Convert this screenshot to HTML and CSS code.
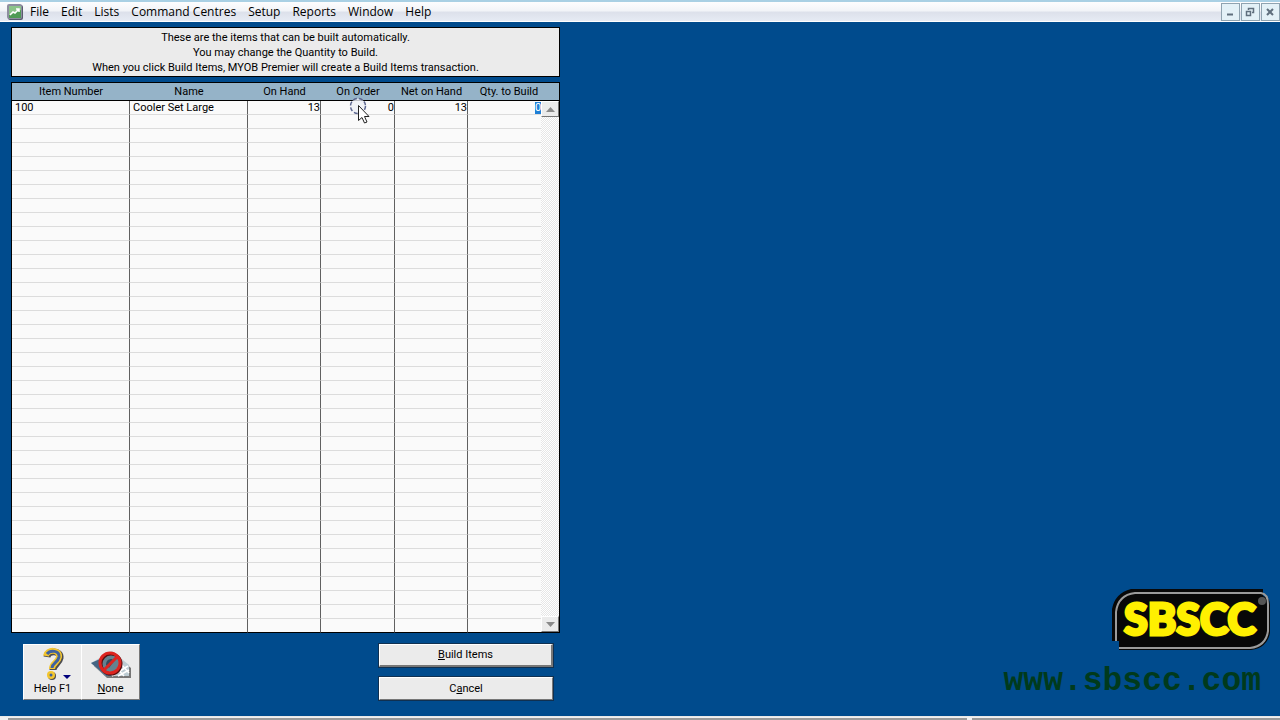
FILE: index.html
```
<!DOCTYPE html>
<html lang="en">
<head>
  <meta charset="UTF-8">
  <title>Auto-Build Items</title>
  <link rel="stylesheet" href="styles.css">
</head>
<body>
<header class="menubar">
  <svg class="appIcon" width="16" height="16" viewBox="0 0 16 16">
    <rect x="1" y="1" width="15" height="15" rx="2" fill="#5a5a6e"/>
    <rect x="0" y="0" width="15" height="15" rx="2" fill="#8d8d9f"/>
    <rect x="2" y="2" width="12" height="12" fill="#4f9a55"/>
    <path d="M2 2h12v4L2 11z" fill="#8cc48a"/>
    <path d="M3 11l3-3 2 1 4-4M9 5h3v3" fill="none" stroke="#fff" stroke-width="1.5"/>
  </svg>
  <nav class="menu">
    <a href="#">File</a>
    <a href="#">Edit</a>
    <a href="#">Lists</a>
    <a href="#">Command Centres</a>
    <a href="#">Setup</a>
    <a href="#">Reports</a>
    <a href="#">Window</a>
    <a href="#">Help</a>
  </nav>
  <div class="winButtons">
    <button type="button" aria-label="Minimize"><svg width="16" height="15"><path d="M5 10.500h6" stroke="#5f6f7d" stroke-width="2"/></svg></button>
    <button type="button" aria-label="Restore"><svg width="16" height="15"><path d="M6.500 6V4.500h5v4H10M4.500 7.500h4v4h-4z" fill="none" stroke="#5f6f7d" stroke-width="1.500"/></svg></button>
    <button type="button" aria-label="Close"><svg width="16" height="15"><path d="M5 5l6 6M11 5l-6 6" stroke="#5f6f7d" stroke-width="2"/></svg></button>
  </div>
</header>

<main class="desktop">
  <form class="dialog">
    <div class="notice">
      <p>These are the items that can be built automatically.</p>
      <p>You may change the Quantity to Build.</p>
      <p>When you click Build Items, MYOB Premier will create a Build Items transaction.</p>
    </div>

    <div class="grid">
      <table class="items">
        <colgroup>
          <col class="cNumber"><col><col class="cQty"><col class="cOrder"><col class="cQty"><col class="cQty">
        </colgroup>
        <thead>
          <tr><th>Item Number</th><th>Name</th><th>On Hand</th><th>On Order</th><th>Net on Hand</th><th>Qty. to Build</th></tr>
        </thead>
        <tbody id="rows">
          <tr>
            <td>100</td><td>Cooler Set Large</td><td class="num">13</td><td class="num">0</td><td class="num">13</td>
            <td class="num edit"><input type="text" value="0" aria-label="Qty. to Build"></td>
          </tr>
        </tbody>
      </table>
      <div class="scroll">
        <div class="scrollHead"></div>
        <button type="button" class="arrow" aria-label="Scroll up"><svg width="9" height="5"><path d="M0 5l4.500-5L9 5z" fill="#8a8a8a"/></svg></button>
        <div class="track"></div>
        <button type="button" class="arrow" aria-label="Scroll down"><svg width="9" height="5"><path d="M0 0l4.500 5L9 0z" fill="#8a8a8a"/></svg></button>
      </div>
      <svg class="pointer" width="22" height="28" viewBox="0 0 22 28">
        <circle cx="9" cy="9" r="7.500" fill="#eef0f6" fill-opacity=".8" stroke="#5c6690" stroke-width="1.500" stroke-dasharray="4 2"/>
        <path d="M9.500 8.500v15l3.500-3 2.500 5.500 2.500-1-2.500-5.500h4.500z" fill="#fff" stroke="#222"/>
      </svg>
    </div>

    <div class="actions">
      <div class="tools">
        <button type="button" class="tool">
          <svg width="40" height="36" viewBox="0 0 40 36">
            <path d="M13 10c1-7 14-7 13 1-1 6-7 6-7 12" transform="translate(1 1)" fill="none" stroke="#4c4c50" stroke-width="7"/>
            <path d="M13 10c1-7 14-7 13 1-1 6-7 6-7 12" fill="none" stroke="#f3c52e" stroke-width="6"/>
            <path d="M14 8c3-4 13-4 12 3-1 6-7 6-7 11" fill="none" stroke="#3f62a0" stroke-width="3"/>
            <circle cx="19" cy="30" r="4" fill="#4c4c50"/>
            <circle cx="18" cy="29" r="4" fill="#f3c52e"/>
            <circle cx="18" cy="29" r="1.500" fill="#3f62a0"/>
            <path d="M30 29h8l-4 4z" fill="#00007c"/>
          </svg>
          <span>Help F1</span>
        </button>
        <button type="button" class="tool">
          <svg width="42" height="36" viewBox="0 0 42 36">
            <path d="M4 20L24 8l17 14v10H17z" fill="#777"/>
            <path d="M1 17L22 5l17 14v11H16z" fill="#bccbd2"/>
            <path d="M1 17l9-4 12 17h-6z" fill="#456584"/>
            <path d="M22 30l16-10M28 30l11-6M26 21l8 9M31 18l8 9" stroke="#fff" stroke-width="1.500"/>
            <circle cx="20" cy="17" r="9" fill="#64828f"/>
            <path d="M16 19c0-4 2-6 6-6l2 2-5 7z" fill="#344b5e"/>
            <circle cx="21" cy="18" r="10" fill="none" stroke="#551010" stroke-width="3"/>
            <circle cx="20" cy="17" r="10" fill="none" stroke="#dd241f" stroke-width="3"/>
            <path d="M13 25L28 10" stroke="#dd241f" stroke-width="3"/>
          </svg>
          <span><u>N</u>one</span>
        </button>
      </div>
      <div class="commands">
        <button type="submit" class="command default"><span><u>B</u>uild Items</span></button>
        <button type="button" class="command"><span>C<u>a</u>ncel</span></button>
      </div>
    </div>
  </form>

  <aside class="brand">
    <div class="logo">
      <svg width="160" height="64" viewBox="0 0 160 64">
        <path d="M20 1h132v7q7 1 7 9v28q-3 15-19 17H8V53H1V21Q4 5 20 1z" fill="#080808"/>
        <path d="M5 53V24Q7 7 24 5h126q7 1 7 11v27q-2 15-18 17H8" fill="none" stroke="#9b9b9b" stroke-width="2"/>
        <circle cx="151" cy="13" r="4" fill="#555"/>
      </svg>
      <span>SBSCC</span>
    </div>
    <a class="site" href="#">www.sbscc.com</a>
  </aside>
</main>

<footer class="status">
  <div class="pane"></div>
  <div class="pane small"></div>
</footer>

<script>
  // fill the rest of the list with blank lines
  var rows = document.getElementById('rows');
  for (var i = 0; i < 37; i++) {
    var tr = rows.insertRow();
    for (var j = 0; j < 6; j++) {
      tr.insertCell();
    }
  }
</script>
</body>
</html>
```
FILE: styles.css
```
* { box-sizing: border-box; }
body { margin: 0; min-height: 100vh; display: flex; flex-direction: column; background: #004b8d; color: #000; font: 11px/14px Roboto, "Liberation Sans", sans-serif; }
p { margin: 0; }
button { font: inherit; color: inherit; padding: 0; border-radius: 0; }

.menubar { display: flex; align-items: center; height: 22px; padding: 0 0 0 7px; border-top: 2px solid #a9d0e4; border-bottom: 1px solid #fff; background: linear-gradient(#fdfdfe, #f2f4f8 45%, #dde1eb 55%, #e6ebf4); }
.menu { display: flex; gap: 12px; padding-left: 7px; font: 12px/18px "Open Sans", "Noto Sans", sans-serif; }
.menu a { color: #000; text-decoration: none; white-space: nowrap; }
.winButtons { display: flex; gap: 1px; margin-left: auto; }
.winButtons button { display: flex; width: 19px; height: 18px; border: 1px solid #8fa3b0; background: #e3f1f7; }

.desktop { flex: 1; display: flex; padding: 5px 9px 14px 11px; }
.dialog { flex: 1; max-width: 549px; }
.notice { padding: 2px 0 1px; border: 1px solid #000; background: #ebebeb; text-align: center; line-height: 15px; }

.grid { position: relative; display: flex; margin-top: 5px; border: 1px solid #000; border-bottom: 0; background: #fafafa; }
.items { flex: 1; table-layout: fixed; border-spacing: 0; }
.cNumber { width: 118px; }
.cQty { width: 73px; }
.cOrder { width: 74px; }
.items th { height: 18px; padding: 1px 0 0; border-bottom: 1px solid #000; background: #95b3c8; font-weight: normal; line-height: 14px; white-space: nowrap; }
.items th:last-child { padding-left: 9px; }
.items td { height: 14px; padding: 1px 0 0 3px; border-right: 1px solid #606060; border-bottom: 1px solid #dcdcdc; line-height: 12px; white-space: nowrap; }
.items td:last-child { border-right: 0; }
.items tr:last-child td { border-bottom-color: #000; }
.items .num { padding-left: 0; text-align: right; }
.edit input { display: block; width: 6px; height: 12px; margin-left: auto; padding: 0; border: 0; background: #1f7fd6; color: #fff; font: inherit; }

.scroll { display: flex; flex-direction: column; width: 18px; border-bottom: 1px solid #000; }
.scrollHead { height: 18px; border-bottom: 1px solid #000; background: #95b3c8; }
.arrow { display: flex; align-items: center; justify-content: center; height: 16px; border: 1px solid; border-color: #fff #777 #777 #fff; background: #ebebeb; }
.track { flex: 1; background: repeating-conic-gradient(#e6e6e6 0 25%, #fff 0 50%) 0 0 / 2px 2px; }
.pointer { position: absolute; left: 337px; top: 14px; }

.actions { display: flex; justify-content: space-between; padding: 11px 7px 0 12px; }
.tools { display: flex; }
.tool { display: flex; flex-direction: column; align-items: center; width: 59px; height: 56px; padding-top: 1px; border: 1px solid; border-color: #fff #777 #777 #fff; background: #ebebeb; }
.tool + .tool { margin-left: -1px; }
.commands { display: flex; flex-direction: column; gap: 10px; width: 174px; }
.command { height: 23px; border: 1px solid; border-color: #fff #777 #777 #fff; background: #ebebeb; outline: 1px solid #103050; }
.default { border-width: 1px 2px 2px 1px; }

.brand { display: flex; flex-direction: column; align-items: flex-end; align-self: flex-end; margin-left: auto; }
.logo { position: relative; width: 160px; height: 64px; }
.logo span { position: absolute; left: 13px; top: 6px; color: #fff000; font: 900 43px/50px Lato, sans-serif; -webkit-text-stroke: 3px #fff000; }
.site { margin: 10px 10px 0 0; color: #003a1c; font: bold 33px/40px "Liberation Mono", "Courier New", monospace; text-decoration: none; }

.status { flex: none; display: flex; gap: 5px; height: 4px; padding: 1px 0 0 8px; border-top: 1px solid #e8e8e8; background: #f0f0f0; }
.pane { flex: 1; background: #9a9a9a; }
.small { flex: 0 1 308px; }
```
